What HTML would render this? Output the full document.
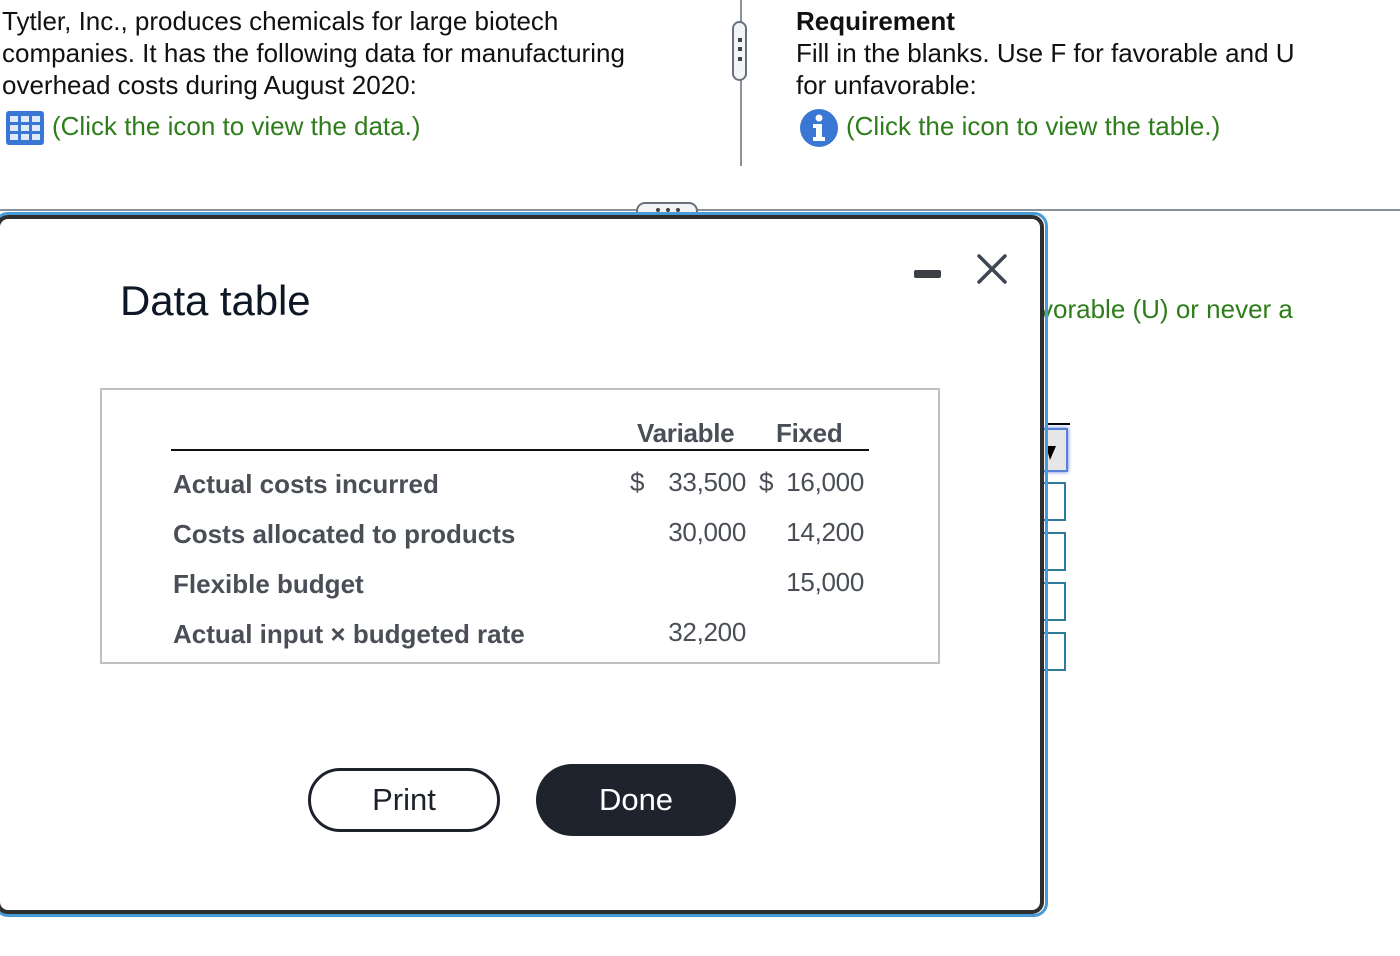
<!DOCTYPE html>
<html><head><style>
body{margin:0;width:1400px;height:956px;position:relative;overflow:hidden;background:#fff;font-family:"Liberation Sans",sans-serif;}
.a{position:absolute;white-space:nowrap}
.t{font-size:26px;color:#111;line-height:32px;letter-spacing:0}
.g{color:#2e7d1b}
.tx{font-size:26px;color:#4a4f57;letter-spacing:-0.3px}
.lb{letter-spacing:0}
.r{text-align:right}
.b{font-weight:bold}
</style></head><body>
<div class="a t" style="left:2px;top:5px">Tytler, Inc., produces chemicals for large biotech<br>companies. It has the following data for manufacturing<br>overhead costs during August 2020:</div>
<svg class="a" style="left:6px;top:111px" width="38" height="34" viewBox="0 0 38 34"><rect x="0" y="0" width="38" height="34" rx="3" fill="#3a76d4"/><g fill="#dfe9fb"><rect x="4" y="5" width="8" height="6"/><rect x="15" y="5" width="8" height="6"/><rect x="26" y="5" width="8" height="6"/><rect x="4" y="14" width="8" height="6"/><rect x="15" y="14" width="8" height="6"/><rect x="26" y="14" width="8" height="6"/><rect x="4" y="23" width="8" height="6"/><rect x="15" y="23" width="8" height="6"/><rect x="26" y="23" width="8" height="6"/></g></svg>
<div class="a t g" style="left:52px;top:110px">(Click the icon to view the data.)</div>
<div class="a" style="left:740px;top:0;width:2px;height:166px;background:#8a929c"></div>
<div class="a" style="left:732px;top:21px;width:15px;height:60px;border:2px solid #68717c;border-radius:9px;background:#f2f4f6;box-sizing:border-box"></div>
<div class="a" style="left:738px;top:38px;width:4px;height:4px;background:#444;box-shadow:0 9px 0 #444,0 19px 0 #444"></div>
<div class="a t" style="left:796px;top:5px"><b>Requirement</b><br>Fill in the blanks. Use F for favorable and U<br>for unfavorable:</div>
<svg class="a" style="left:799px;top:108px" width="40" height="40" viewBox="0 0 40 40"><circle cx="20" cy="20" r="19" fill="#3a76d4"/><circle cx="20" cy="10" r="3.5" fill="#fff"/><path d="M14 16h9v13h3v4H14v-4h3v-9h-3z" fill="#fff"/></svg>
<div class="a t g" style="left:846px;top:110px">(Click the icon to view the table.)</div>
<div class="a" style="left:0;top:209px;width:1400px;height:2px;background:#8a929c"></div>
<div class="a t g" style="left:1040px;top:293px">vorable (U) or never a</div>
<div class="a" style="left:1046px;top:423px;width:24px;height:2px;background:#000"></div>
<div class="a" style="left:1040px;top:428px;width:28px;height:44px;border:2px solid #5a7fd8;background:#e6e6e6;box-sizing:border-box;box-shadow:0 0 4px #5a7fd8"></div>
<svg class="a" style="left:1046px;top:446px" width="12" height="14"><path d="M0 0H10L4 14Z" fill="#000"/></svg>
<div class="a" style="left:1040px;top:482px;width:26px;height:39px;border:2px solid #2d7a9a;box-sizing:border-box"></div>
<div class="a" style="left:1040px;top:532px;width:26px;height:39px;border:2px solid #2d7a9a;box-sizing:border-box"></div>
<div class="a" style="left:1040px;top:582px;width:26px;height:39px;border:2px solid #2d7a9a;box-sizing:border-box"></div>
<div class="a" style="left:1040px;top:632px;width:26px;height:39px;border:2px solid #2d7a9a;box-sizing:border-box"></div>
<div class="a" style="left:636px;top:202px;width:62px;height:14px;border:2px solid #68717c;border-bottom:none;border-radius:9px 9px 0 0;background:#f2f4f6;box-sizing:border-box"></div>
<div class="a" style="left:656px;top:208px;width:4px;height:4px;border-radius:2px;background:#444;box-shadow:10px 0 0 #444,20px 0 0 #444"></div>
<div class="a" style="left:-6px;top:212px;width:1054px;height:705px;border:3px solid #4a9ad6;border-radius:14px;box-sizing:border-box"></div>
<div class="a" style="left:-4px;top:215px;width:1048px;height:699px;border:4px solid #2e2f31;border-radius:12px;box-sizing:border-box;background:#fff"></div>
<div class="a" style="left:120px;top:277px;font-size:42px;color:#0d1726;letter-spacing:-0.1px">Data table</div>
<div class="a" style="left:914px;top:270px;width:27px;height:8px;border-radius:2px;background:#3d4147"></div>
<svg class="a" style="left:977px;top:254px" width="30" height="30" viewBox="0 0 30 30"><path d="M2 2L28 28M28 2L2 28" stroke="#3d4652" stroke-width="3.5" stroke-linecap="round"/></svg>
<div class="a" style="left:100px;top:388px;width:840px;height:276px;border:2px solid #c0c0c0;box-sizing:border-box"></div>
<div class="a" style="left:171px;top:449px;width:698px;height:2px;background:#111"></div>
<div class="a tx b" style="left:637px;top:418px">Variable</div>
<div class="a tx b" style="left:776px;top:418px">Fixed</div>
<div class="a tx b lb" style="left:173px;top:469px">Actual costs incurred</div>
<div class="a tx b lb" style="left:173px;top:519px">Costs allocated to products</div>
<div class="a tx b lb" style="left:173px;top:569px">Flexible budget</div>
<div class="a tx b lb" style="left:173px;top:619px">Actual input × budgeted rate</div>
<div class="a tx" style="left:630px;top:467px">$</div>
<div class="a tx r" style="left:646px;width:100px;top:467px">33,500</div>
<div class="a tx" style="left:759px;top:467px">$</div>
<div class="a tx r" style="left:764px;width:100px;top:467px">16,000</div>
<div class="a tx r" style="left:646px;width:100px;top:517px">30,000</div>
<div class="a tx r" style="left:764px;width:100px;top:517px">14,200</div>
<div class="a tx r" style="left:764px;width:100px;top:567px">15,000</div>
<div class="a tx r" style="left:646px;width:100px;top:617px">32,200</div>
<div class="a" style="left:308px;top:768px;width:192px;height:64px;border:3px solid #1c212b;border-radius:32px;box-sizing:border-box;font-size:31px;color:#1c212b;text-align:center;line-height:58px">Print</div>
<div class="a" style="left:536px;top:764px;width:200px;height:72px;border-radius:36px;background:#1f232d;font-size:31px;color:#fff;text-align:center;line-height:72px">Done</div>
</body></html>
